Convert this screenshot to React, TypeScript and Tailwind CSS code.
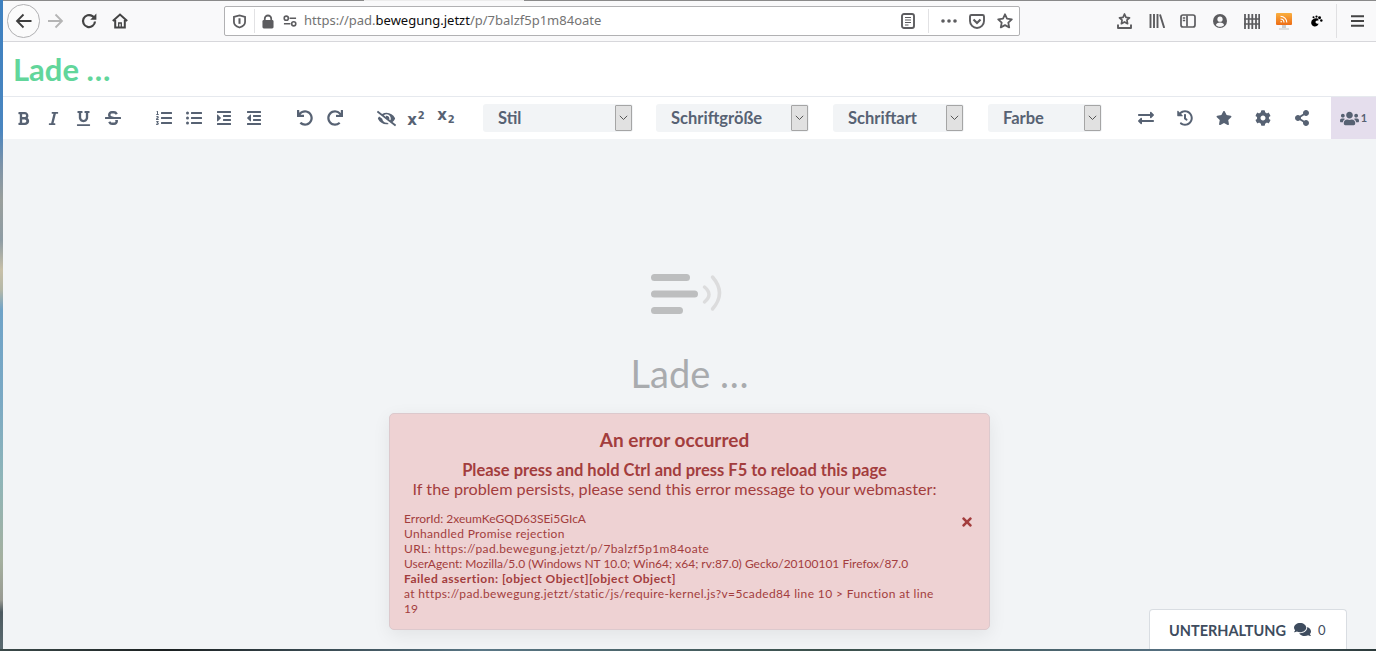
import React from "react";
import {
  FaBold, FaItalic, FaUnderline, FaStrikethrough, FaListOl, FaListUl, FaIndent, FaOutdent,
  FaUndo, FaRedo, FaEyeSlash, FaExchangeAlt, FaHistory, FaStar,
  FaCog, FaShareAlt, FaUsers, FaComments, FaTimes,
} from "react-icons/fa";

const ui = "font-['Noto_Sans',sans-serif]";
const q = "font-['Lato',sans-serif]";

function TI({ I, size = 16 }: { I: React.ComponentType<{ size?: number }>; size?: number }) {
  return (
    <div className="w-[30px] h-[42px] flex items-center justify-center text-[#576273]">
      <I size={size} />
    </div>
  );
}

function RI({ I, size = 16 }: { I: React.ComponentType<{ size?: number }>; size?: number }) {
  return (
    <div className="w-[39px] h-[42px] flex items-center justify-center text-[#576273]">
      <I size={size} />
    </div>
  );
}

function Sel({ label, w }: { label: string; w: string }) {
  return (
    <div className={`${w} h-[28px] bg-[#f2f4f6] rounded-[3px] flex items-center justify-between pl-[15px] pr-px`}>
      <span className={`${q} text-[16.5px] font-bold text-[#576273] pt-px`}>{label}</span>
      <div className="w-[17px] h-[26px] bg-[#e1e1e1] border border-[#a5a5a5] rounded-[1px] flex items-center justify-center">
        <svg width="9" height="6" viewBox="0 0 9 6" fill="none" stroke="#555" strokeWidth="1"><path d="M.8.8 4.500 4.500 8.200.8" /></svg>
      </div>
    </div>
  );
}

const c = "#5c5c5f";

function NavBar() {
  return (
    <div className="h-[42px] bg-[#f9f9fa] border-b border-[#d7d7db] flex flex-col shrink-0">
      <div className="h-px flex shrink-0">
        <div className="w-[361px] bg-[#8a8a8a]" />
        <div className="w-[160px] bg-[#ececec]" />
        <div className="flex-1 bg-[#8a8a8a]" />
      </div>
      <div className="flex-1 flex items-center">
        <div className="w-[33px] h-[34px] rounded-full border border-[#b1b1b3] bg-[#fbfbfb] flex items-center justify-center ml-[4px]">
          <svg width="17" height="16" viewBox="0 0 17 16" fill="none" stroke="#3e3e3e" strokeWidth="1.800"><path d="M16.500 8H2M8.500 1.500 2 8l6.500 6.500" /></svg>
        </div>
        <svg className="ml-[8px]" width="16" height="16" viewBox="0 0 16 16" fill="none" stroke="#b5b5b5" strokeWidth="1.800"><path d="M0 8h14M7.500 1.500 14 8l-6.500 6.500" /></svg>
        <svg className="ml-[17px]" width="16" height="16" viewBox="0 0 16 16" fill="none" stroke="#444" strokeWidth="2.200"><path d="M14 8.500A6 6 0 1 1 11.500 3.200L14 5" /><path d="M15.400 .5v6.200H9.200z" fill="#444" stroke="none" /></svg>
        <svg className="ml-[15px]" width="16" height="16" viewBox="0 0 16 16" fill="none" stroke="#444" strokeWidth="2"><path d="M.8 8 8 1.500 15.200 8M3.200 7v7.500h9.600V7" /><path d="M6.700 14.500V10h2.600v4.500" strokeWidth="1.300" /></svg>
        <div className="ml-[96px] w-[796px] h-[30px] bg-white border border-[#b1b1b3] rounded-[2px] flex items-center pl-[8px]">
          <svg width="13" height="15" viewBox="0 0 14 15" fill="none" stroke={c} strokeWidth="1.900"><path d="M1 2.600 7 1l6 1.600V8c0 3-3 5-6 6-3-1-6-3-6-6z" /><path d="M7 4v6" strokeWidth="2.200" /></svg>
          <div className="w-px h-[24px] bg-[#e2e2e4] ml-[8px]" />
          <svg className="ml-[7px]" width="12" height="15" viewBox="0 0 13 15" fill={c}><rect x="0.500" y="6" width="12" height="9" rx="1.500" /><path d="M3 6.500V4.500a3.500 3.500 0 0 1 7 0v2" fill="none" stroke={c} strokeWidth="1.900" /></svg>
          <svg className="ml-[9px]" width="14" height="12" viewBox="0 0 15 12" fill="none" stroke={c} strokeWidth="1.700"><circle cx="3.500" cy="3" r="2.200" /><path d="M7 3h7M1 9h7" /><circle cx="11.500" cy="9" r="2.200" /></svg>
          <div className={`${ui} ml-[7px] text-[13px] text-[#737373] whitespace-nowrap`}>
            https://pad.<span className="text-[#0c0c0d]">bewegung.jetzt</span>/p/7balzf5p1m84oate
          </div>
          <div className="flex-1" />
          <svg width="14" height="16" viewBox="0 0 14 16" fill="none" stroke={c} strokeWidth="1.900"><rect x="1" y="1" width="12" height="14" rx="2" /><path d="M4 4.500h6M4 7h6M4 9.500h6M4 12h3.500" strokeWidth="1.100" /></svg>
          <div className="w-px h-[24px] bg-[#e2e2e4] ml-[13px]" />
          <svg className="ml-[12px]" width="16" height="4" viewBox="0 0 16 4" fill={c}><circle cx="2" cy="2" r="1.800" /><circle cx="8" cy="2" r="1.800" /><circle cx="14" cy="2" r="1.800" /></svg>
          <svg className="ml-[12px]" width="16" height="15" viewBox="0 0 16 15" fill="none" stroke={c} strokeWidth="1.900"><path d="M2.500 1h11A1.500 1.500 0 0 1 15 2.500V7A7 7 0 0 1 1 7V2.500A1.500 1.500 0 0 1 2.500 1z" /><path d="M4.500 5.500 8 9l3.500-3.500" strokeWidth="2.200" /></svg>
          <svg className="ml-[12px] mr-[6px]" width="16" height="16" viewBox="0 0 16 16" fill="none" stroke={c} strokeWidth="1.800" strokeLinejoin="round"><path d="M8 1.300 10 5.700l4.800.6-3.500 3.300.9 4.800L8 12.100l-4.200 2.300.9-4.800L1.200 6.300 6 5.700z" /></svg>
        </div>
        <div className="flex-1" />
        <div className="flex items-center">
          <svg width="15" height="16" viewBox="0 0 15 16" fill="none" stroke={c} strokeWidth="1.700" strokeLinejoin="round"><path d="M7.500 1 9 4.400l3.500.4-2.600 2.400.7 3.500-3.100-1.800-3.100 1.800.7-3.500L2.500 4.800 6 4.400z" /><path d="M1 11.500v3.500h13v-3.500" strokeWidth="1.900" /></svg>
          <svg className="ml-[17px]" width="16" height="14" viewBox="0 0 16 14" fill="none" stroke={c} strokeWidth="1.900"><path d="M1.500 0v14M5 0v14M8.500 0v14M11 .5 15.200 14" /></svg>
          <svg className="ml-[15px]" width="16" height="14" viewBox="0 0 16 14" fill="none" stroke={c} strokeWidth="1.700"><rect x="1" y="1" width="14" height="12" rx="2" /><path d="M7 1.500v11" /><path d="M2.800 4h2.400M2.800 6.500h2.400" strokeWidth="1.300" /></svg>
          <svg className="ml-[17px]" width="14" height="14" viewBox="0 0 14 14"><circle cx="7" cy="7" r="7" fill={c} /><circle cx="7" cy="5.200" r="2.600" fill="#f9f9fa" /><path d="M2.800 11c1-2 2.500-2.600 4.200-2.600s3.200.6 4.200 2.600c-1 1.200-2.500 1.800-4.200 1.800S3.800 12.200 2.800 11z" fill="#f9f9fa" /></svg>
          <svg className="ml-[17px]" width="16" height="15" viewBox="0 0 16 15" fill="none" stroke={c}><path d="M1 0v15M4.700 0v15M8.300 0v15M12 0v15M15.200 0v15" strokeWidth="1.800" /><path d="M0 5h16M0 10h16" strokeWidth="1.300" /></svg>
          <div className="ml-[16px] w-[16px] h-[17px] flex flex-col items-center">
            <div className="w-[16px] h-[12px] rounded-[1px] bg-[linear-gradient(#f9b040,#ee6c14)] flex items-center justify-center">
              <svg width="8" height="8" viewBox="0 0 8 8" fill="none" stroke="#fff" strokeWidth="1.100"><path d="M.5 1.200a6.300 6.300 0 0 1 6.300 6.300M.5 4a3.500 3.500 0 0 1 3.500 3.500" /><circle cx="1.200" cy="6.800" r=".8" fill="#fff" stroke="none" /></svg>
            </div>
            <div className="w-[4px] h-[3px] bg-[#ccc]" />
            <div className="w-[10px] h-[2px] bg-[#ddd]" />
          </div>
          <svg className="ml-[18px]" width="13" height="15" viewBox="0 0 14 14" fill="#000"><path d="M6.500 3.500c2.500-.2 3.200 1.500 2.300 2.800-1.300-.8-3 .2-2.800 1.600.2 1.500 2 2 3.300 1.200-.5 2-2.400 3.400-4.500 3.200C2.500 12 1 10 1.300 7.700 1.600 5.300 3.800 3.700 6.500 3.500z" /><circle cx="3.800" cy="2.400" r="1.100" /><circle cx="7" cy="1.700" r="1.200" /><circle cx="10.300" cy="3" r="1.600" /><circle cx="12.200" cy="5.900" r="1.300" /></svg>
          <div className="ml-[13px] w-px h-[34px] bg-[#e0e0e2]" />
          <svg className="ml-[14px] mr-[12px]" width="13" height="12" viewBox="0 0 13 12" fill="none" stroke="#444" strokeWidth="2"><path d="M0 1.200h13M0 6h13M0 10.800h13" /></svg>
        </div>
      </div>
    </div>
  );
}

function Script({ sup }: { sup: boolean }) {
  return (
    <div className={`w-[30px] h-[42px] flex justify-center text-[#576273] font-['DejaVu_Sans',sans-serif] font-bold ${sup ? "pt-[14px]" : "pt-[12px]"}`}>
      <div className={`flex ${sup ? "items-start" : "items-end"} h-[16px]`}>
        <span className={`text-[15px] leading-[13px] ${sup ? "mt-[3px]" : "mb-[3px]"}`}>x</span>
        <span className="text-[10px] leading-[10px] ml-px">2</span>
      </div>
    </div>
  );
}

function Toolbar() {
  return (
    <div className="h-[42px] bg-white flex items-center pl-[5px] shrink-0">
      <div className="flex">
        <TI I={FaBold} size={15} /><TI I={FaItalic} size={15} /><TI I={FaUnderline} size={15} /><TI I={FaStrikethrough} size={16} />
      </div>
      <div className="flex ml-[21px]">
        <TI I={FaListOl} /><TI I={FaListUl} /><TI I={FaIndent} /><TI I={FaOutdent} />
      </div>
      <div className="flex ml-[21px]">
        <TI I={FaUndo} /><TI I={FaRedo} />
      </div>
      <div className="flex ml-[21px]">
        <TI I={FaEyeSlash} size={19} /><Script sup /><Script sup={false} />
      </div>
      <div className="flex ml-[22px]">
        <Sel label="Stil" w="w-[150px]" />
        <Sel label="Schriftgröße" w="w-[153px] ml-[23px]" />
        <Sel label="Schriftart" w="w-[131px] ml-[24px]" />
        <Sel label="Farbe" w="w-[114px] ml-[24px]" />
      </div>
      <div className="flex ml-[24px]">
        <RI I={FaExchangeAlt} /><RI I={FaHistory} /><RI I={FaStar} /><RI I={FaCog} /><RI I={FaShareAlt} />
      </div>
      <div className="flex-1" />
      <div className="w-[45px] h-[42px] bg-[#e5deed] flex items-center justify-center gap-[2px] text-[#576273]">
        <FaUsers size={19} />
        <span className={`${q} text-[11px] font-bold`}>1</span>
      </div>
    </div>
  );
}

export default function App() {
  return (
    <div className="relative w-[1376px] h-[651px] overflow-hidden bg-[linear-gradient(90deg,#3b4a4a,#1a1f20_12%,#5a7786_35%,#3a4f4a_60%,#546f80_85%,#2c3a3a)] flex">
      <div className="w-[3px] h-[649px] shrink-0 bg-[linear-gradient(#3d80c0_0px,#4a86c0_130px,#7d93a8_165px,#9a9f9c_200px,#8e9ca4_240px,#c8c0a8_270px,#b5b8a8_290px,#6fa3c8_310px,#7ba9c4_400px,#8fb5b8_480px,#a5b09f_560px,#999a92_600px,#4d5a60_612px,#5a6a70_649px)]" />
      <div className="flex-1 h-[649px] flex flex-col bg-[#f2f4f6] min-w-0">
        <NavBar />
        <div className="h-[55px] bg-white border-b border-[#e6e9ee] flex items-center pl-[10px] shrink-0">
          <span className={`${q} text-[31px] font-bold text-[#62d69b]`}>Lade …</span>
        </div>
        <Toolbar />
        <div className="flex-1 flex flex-col items-center pr-[3px] min-h-0">
          <svg className="mt-[135px] ml-[3px]" width="80" height="42" viewBox="0 0 80 42" fill="none">
            <path d="M4.500 3.500h32M4.500 20h40M4.500 36.500h25" stroke="#bdbebf" strokeWidth="7" strokeLinecap="round" />
            <path d="M54.500 13Q63.500 20.500 54.500 28" stroke="#dcdcdd" strokeWidth="3.500" strokeLinecap="round" />
            <path d="M62.500 3Q76.500 19 62.500 35" stroke="#dcdcdd" strokeWidth="3.500" strokeLinecap="round" />
          </svg>
          <div className={`${q} text-[38px] leading-[46px] text-[#a9abae] mt-[34px] ml-[3px]`}>Lade …</div>
          <div className={`${q} mt-[17px] ml-[3px] w-[601px] h-[217px] bg-[#eed2d3] border border-[#dcc9cd] rounded-[5px] shadow-[0_5px_18px_rgba(0,0,0,0.07)] text-[#a33d3d] pt-[15px] pb-[8px] px-[14px] shrink-0`}>
            <div className="pr-[30px] text-center">
              <div className="text-[19px] leading-[22px] font-bold">An error occurred</div>
              <div className="text-[16.500px] leading-[18px] font-bold mt-[10px]">Please press and hold Ctrl and press F5 to reload this page</div>
              <div className="text-[16.200px] leading-[19px]">If the problem persists, please send this error message to your webmaster:</div>
            </div>
            <div className="flex items-start mt-[13px]">
              <div className="w-[532px] text-[12px] leading-[15px] whitespace-nowrap">
                <div>ErrorId: 2xeumKeGQD63SEi5GIcA</div>
                <div className="tracking-[0.33px]">Unhandled Promise rejection</div>
                <div className="tracking-[0.38px]">URL: https://pad.bewegung.jetzt/p/7balzf5p1m84oate</div>
                <div>UserAgent: Mozilla/5.0 (Windows NT 10.0; Win64; x64; rv:87.0) Gecko/20100101 Firefox/87.0</div>
                <div className="font-bold tracking-[0.5px]">Failed assertion: [object Object][object Object]</div>
                <div className="tracking-[0.37px]">at https://pad.bewegung.jetzt/static/js/require-kernel.js?v=5caded84 line 10 &gt; Function at line</div>
                <div>19</div>
              </div>
              <div className="ml-[24px]"><FaTimes size={14} className="mt-[4px]" /></div>
            </div>
          </div>
        </div>
      </div>
      <div className="absolute left-[1149px] top-[609px] w-[198px] h-[40px] bg-white border border-b-0 border-[#d9dde2] rounded-t-[4px] flex items-center pl-[19px] pt-[3px] text-[#3e4c5e]">
        <span className={`${q} text-[14.500px] font-bold`}>UNTERHALTUNG</span>
        <FaComments size={17} className="ml-[8px] -mt-[4px]" />
        <span className={`${q} text-[13px] ml-[7px]`}>0</span>
      </div>
    </div>
  );
}
